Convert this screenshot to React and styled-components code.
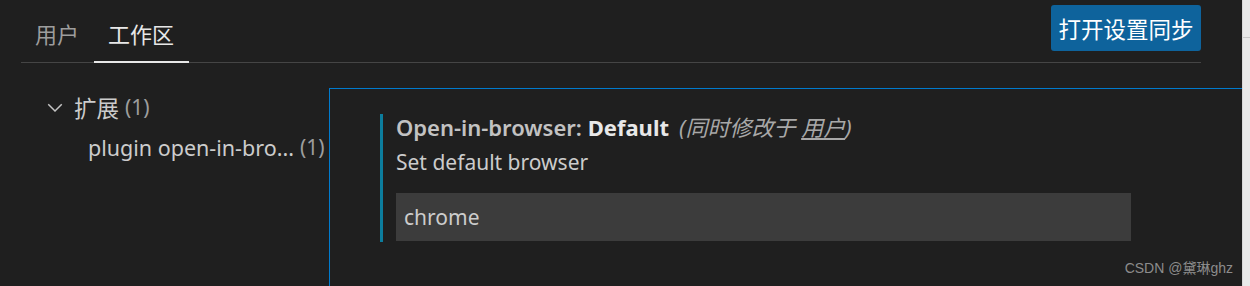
import React from "react";
import styled, { createGlobalStyle } from "styled-components";

// Colors
const colors = {
  bg: "#1f1f1f",
  line: "#454545",
  accent: "#007acc",
  modified: "#0c7d9d",
  button: "#0e639c",
  input: "#3c3c3c",
  text: "#cccccc",
  dim: "#9d9d9d",
};

const font = `"Noto Sans", "Noto Sans CJK SC", sans-serif`;

const GlobalStyle = createGlobalStyle`
  html, body {
    margin: 0;
    padding: 0;
    background: ${colors.bg};
    overflow: hidden;
  }
  body {
    font-family: ${font};
  }
`;

const Page = styled.div`
  display: flex;
  width: 1250px;
  height: 286px;
  background: ${colors.bg};
`;

const Main = styled.div`
  flex: 1;
  display: flex;
  flex-direction: column;
  position: relative;
`;

const EdgeStrip = styled.div`
  width: 7px;
  background: #e9e9e9;
  border-left: 1px solid #d8d8d8;
  display: flex;
  flex-direction: column;
  & > div {
    height: 37px;
    border-bottom: 1px solid #c8c8c8;
  }
`;

const Header = styled.div`
  display: flex;
  justify-content: space-between;
  align-items: flex-end;
  margin: 0 41px 0 21px;
  height: 62px;
  border-bottom: 1px solid ${colors.line};
`;

const Tabs = styled.div`
  display: flex;
`;

const Tab = styled.div`
  padding: 0 15px 0 14px;
  height: 44px;
  line-height: 30px;
  font-size: 22px;
  color: ${(p) => (p.active ? "#e7e7e7" : colors.dim)};
  border-bottom: 2px solid ${(p) => (p.active ? "#e7e7e7" : "transparent")};
  margin-bottom: -1px;
  box-sizing: border-box;
`;

const SyncButton = styled.button`
  width: 150px;
  height: 46px;
  margin-bottom: 11px;
  background: ${colors.button};
  color: #ffffff;
  border: none;
  border-radius: 3px;
  font-family: ${font};
  font-size: 22.5px;
  padding: 0;
`;

const Body = styled.div`
  flex: 1;
  display: flex;
`;

const Sidebar = styled.div`
  width: 308px;
  margin-left: 21px;
  padding-top: 24px;
  box-sizing: border-box;
`;

const TreeRow = styled.div`
  display: flex;
  align-items: center;
  height: 40px;
  padding-left: ${(p) => p.indent}px;
  font-size: ${(p) => (p.group ? 22.5 : 21.5)}px;
  color: ${colors.text};
  white-space: nowrap;
`;

const Count = styled.span`
  color: ${colors.dim};
  margin-left: 6px;
  font-size: 21px;
`;

const Chevron = styled.svg`
  width: 18px;
  height: 18px;
  margin-right: 10px;
`;

const Panel = styled.div`
  flex: 1;
  margin-top: 25px;
  border-top: 1px solid ${colors.accent};
  border-left: 1px solid ${colors.accent};
  padding: 25px 0 0 50px;
`;

const SettingItem = styled.div`
  width: 750px;
  border-left: 3px solid ${colors.modified};
  padding-left: 13px;
  height: 128px;
  display: flex;
  flex-direction: column;
`;

const Title = styled.div`
  font-size: 22px;
  line-height: 26px;
  color: #c2c2c2;
  font-weight: 600;
  white-space: nowrap;
`;

const Strong = styled.span`
  color: #e8e8e8;
  font-weight: 700;
`;

const Note = styled.span`
  font-style: italic;
  font-weight: 400;
  color: #a8a8a8;
  margin-left: 10px;
`;

const Link = styled.span`
  text-decoration: underline;
`;

const Description = styled.div`
  font-size: 21px;
  line-height: 26px;
  margin-top: 9px;
  color: ${colors.text};
`;

const Input = styled.div`
  margin-top: 18px;
  height: 48px;
  width: 735px;
  background: ${colors.input};
  color: ${colors.text};
  font-size: 21px;
  line-height: 48px;
  padding-left: 8px;
  box-sizing: border-box;
`;

const Watermark = styled.div`
  position: absolute;
  right: 9px;
  bottom: 9px;
  font-size: 14px;
  color: #8c8c8c;
  font-family: "Liberation Sans", "Noto Sans CJK SC", sans-serif;
`;

const App = () => (
  <Page>
    <GlobalStyle />
    <Main>
      <Header>
        <Tabs>
          <Tab>用户</Tab>
          <Tab active>工作区</Tab>
        </Tabs>
        <SyncButton>打开设置同步</SyncButton>
      </Header>
      <Body>
        <Sidebar>
          <TreeRow indent={25} group>
            <Chevron viewBox="0 0 16 16">
              <path d="M2 5.5 L8 11.5 L14 5.5" fill="none" stroke="#c5c5c5" strokeWidth="1.3" />
            </Chevron>
            扩展<Count>(1)</Count>
          </TreeRow>
          <TreeRow indent={67}>
            plugin open-in-bro...<Count>(1)</Count>
          </TreeRow>
        </Sidebar>
        <Panel>
          <SettingItem>
            <Title>
              Open-in-browser: <Strong>Default</Strong>
              <Note>
                (同时修改于 <Link>用户</Link>)
              </Note>
            </Title>
            <Description>Set default browser</Description>
            <Input>chrome</Input>
          </SettingItem>
        </Panel>
      </Body>
      <Watermark>CSDN @黛琳ghz</Watermark>
    </Main>
    <EdgeStrip>
      <div />
    </EdgeStrip>
  </Page>
);

export default App;
